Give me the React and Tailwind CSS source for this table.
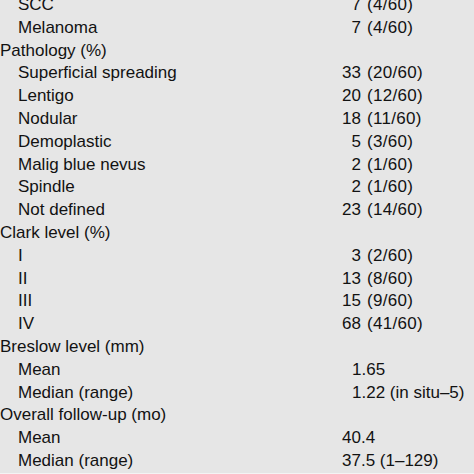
import React from 'react';

const rows = [
  { label: 'SCC', n: '7', rest: '(4/60)', sub: true },
  { label: 'Melanoma', n: '7', rest: '(4/60)', sub: true },
  { label: 'Pathology (%)' },
  { label: 'Superficial spreading', n: '33', rest: '(20/60)', sub: true },
  { label: 'Lentigo', n: '20', rest: '(12/60)', sub: true },
  { label: 'Nodular', n: '18', rest: '(11/60)', sub: true },
  { label: 'Demoplastic', n: '5', rest: '(3/60)', sub: true },
  { label: 'Malig blue nevus', n: '2', rest: '(1/60)', sub: true },
  { label: 'Spindle', n: '2', rest: '(1/60)', sub: true },
  { label: 'Not defined', n: '23', rest: '(14/60)', sub: true },
  { label: 'Clark level (%)' },
  { label: 'I', n: '3', rest: '(2/60)', sub: true },
  { label: 'II', n: '13', rest: '(8/60)', sub: true },
  { label: 'III', n: '15', rest: '(9/60)', sub: true },
  { label: 'IV', n: '68', rest: '(41/60)', sub: true },
  { label: 'Breslow level (mm)' },
  { label: 'Mean', plain: '1.65', far: true, sub: true },
  { label: 'Median (range)', plain: '1.22 (in situ–5)', far: true, sub: true },
  { label: 'Overall follow-up (mo)' },
  { label: 'Mean', plain: '40.4', sub: true },
  { label: 'Median (range)', plain: '37.5 (1–129)', sub: true },
];

function Value({ row }) {
  if (row.plain) {
    return (
      <span className={row.far ? 'pl-[10px] whitespace-nowrap' : 'whitespace-nowrap'}>
        {row.plain}
      </span>
    );
  }
  if (!row.n) return null;
  return (
    <span className="flex whitespace-nowrap">
      <span className="w-[19px] text-right">{row.n}</span>
      <span className="ml-[6px] tracking-[0.3px]">{row.rest}</span>
    </span>
  );
}

export default function App() {
  return (
    <div className="w-[474px] h-[474px] overflow-hidden bg-[#e6e6e6] flex flex-col text-[#121212] text-[17px] leading-[22.8px] font-['Liberation_Sans',Arial,sans-serif]">
      <div className="-mt-[6px] flex flex-col">
        {rows.map((row, i) => (
          <div key={i} className="flex h-[22.8px]">
            <div className={row.sub ? 'w-[342px] pl-[18px] whitespace-nowrap' : 'w-[342px] whitespace-nowrap'}>
              {row.label}
            </div>
            <Value row={row} />
          </div>
        ))}
      </div>
      <div className="mt-auto h-[3px] bg-[#f4f4f4]" />
    </div>
  );
}
